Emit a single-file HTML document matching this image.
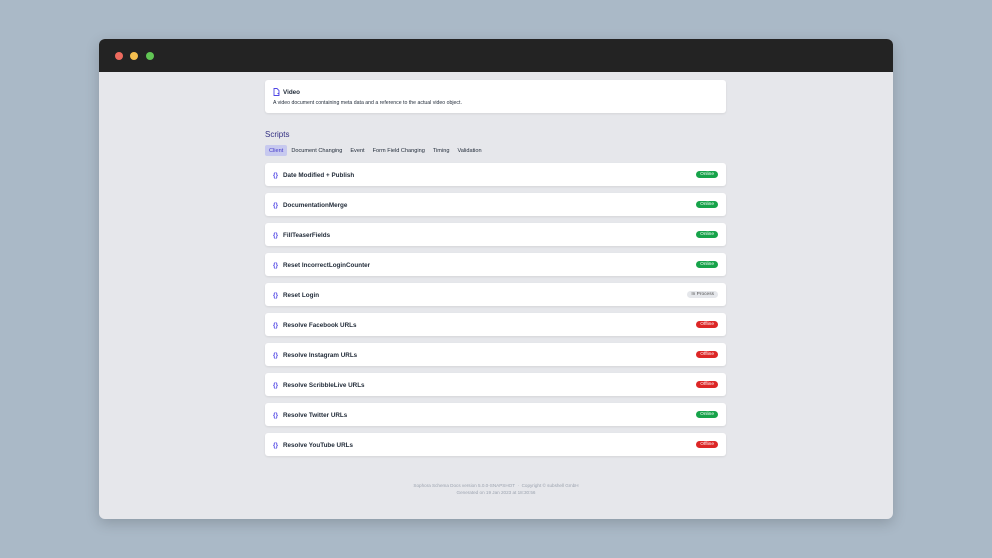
<!DOCTYPE html>
<html><head><style>
*{margin:0;padding:0;box-sizing:border-box}
body{width:992px;height:558px;background:#aab9c7;font-family:"Liberation Sans",sans-serif;position:relative;overflow:hidden}
.win{position:absolute;left:99px;top:39px;width:794px;height:480px;background:#e6e7eb;border-radius:6px;overflow:hidden;box-shadow:0 4px 14px rgba(0,0,0,.18)}
.bar{height:33px;background:#232323;position:relative}
.dot{position:absolute;top:13px;width:8px;height:8px;border-radius:50%}
.card{position:absolute;left:166px;width:461px;background:#fff;border-radius:3px;box-shadow:0 1px 2px rgba(0,0,0,.08)}
.row{height:23px}
.row .ic{position:absolute;left:8px;top:1px;line-height:23px;font-size:6.5px;color:#4f46e5;font-weight:bold}
.row .t{position:absolute;left:18px;top:1px;line-height:23px;font-size:6.3px;color:#1f2937;font-weight:bold}
.b{position:absolute;right:8px;top:8px;height:7px;padding:0 4px;border-radius:4px;font-size:4.8px;display:flex;align-items:center;color:#fff}
.on{background:#16a34a}.off{background:#dc2626}.ip{background:#e5e7eb;color:#555}
.tabs{position:absolute;left:166px;top:106px;font-size:5.6px;color:#1f2937}
.tabs span{display:inline-block;padding:2px 4px 0;height:11px;line-height:9px;border-radius:2px}
</style></head><body>
<div class="win">
<div class="bar"><div class="dot" style="left:16px;background:#ed6a5e"></div><div class="dot" style="left:31px;background:#f5bf4f"></div><div class="dot" style="left:47px;background:#61c554"></div></div>
<div class="card" style="top:41px;height:33px">
<svg style="position:absolute;left:8px;top:8px" width="7" height="8" viewBox="0 0 7 8"><path d="M1 .5h3l2 2v5H1z" fill="none" stroke="#4f46e5" stroke-width=".9"/><path d="M4 5.5l2-1v2z" fill="#4f46e5"/></svg>
<div style="position:absolute;left:18px;top:9px;line-height:8px;font-size:6.3px;font-weight:bold;color:#1f2937">Video</div>
<div style="position:absolute;left:8px;top:19px;line-height:8px;font-size:5.2px;color:#1f2937">A video document containing meta data and a reference to the actual video object.</div>
</div>
<div style="position:absolute;left:166px;top:90px;line-height:12px;font-size:8px;color:#312e81">Scripts</div>
<div class="tabs"><span style="background:#c7c9ef;color:#4338ca">Client</span><span>Document Changing</span><span>Event</span><span>Form Field Changing</span><span>Timing</span><span>Validation</span></div>
<div class="card row" style="top:124px"><span class="ic">{}</span><span class="t">Date Modified + Publish</span><span class="b on">Online</span></div>
<div class="card row" style="top:154px"><span class="ic">{}</span><span class="t">DocumentationMerge</span><span class="b on">Online</span></div>
<div class="card row" style="top:184px"><span class="ic">{}</span><span class="t">FillTeaserFields</span><span class="b on">Online</span></div>
<div class="card row" style="top:214px"><span class="ic">{}</span><span class="t">Reset IncorrectLoginCounter</span><span class="b on">Online</span></div>
<div class="card row" style="top:244px"><span class="ic">{}</span><span class="t">Reset Login</span><span class="b ip">In Process</span></div>
<div class="card row" style="top:274px"><span class="ic">{}</span><span class="t">Resolve Facebook URLs</span><span class="b off">Offline</span></div>
<div class="card row" style="top:304px"><span class="ic">{}</span><span class="t">Resolve Instagram URLs</span><span class="b off">Offline</span></div>
<div class="card row" style="top:334px"><span class="ic">{}</span><span class="t">Resolve ScribbleLive URLs</span><span class="b off">Offline</span></div>
<div class="card row" style="top:364px"><span class="ic">{}</span><span class="t">Resolve Twitter URLs</span><span class="b on">Online</span></div>
<div class="card row" style="top:394px"><span class="ic">{}</span><span class="t">Resolve YouTube URLs</span><span class="b off">Offline</span></div>
<div style="position:absolute;left:0;width:794px;top:443px;text-align:center;font-size:4.6px;line-height:7px;color:#9ca3af">Sophora Schema Docs version 5.0.0-SNAPSHOT &nbsp;·&nbsp; Copyright © subshell GmbH<br>Generated on 19 Jan 2023 at 18:30:56</div>
</div>
</body></html>
